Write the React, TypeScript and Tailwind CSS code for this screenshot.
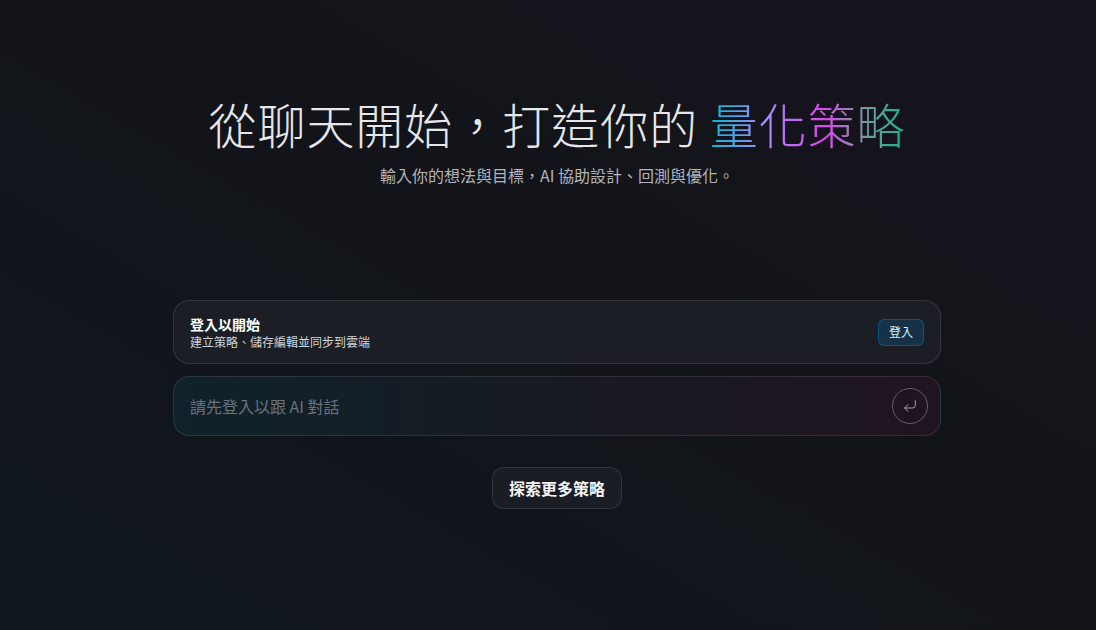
import { CornerDownLeft } from 'lucide-react';

const font = { fontFamily: '"Noto Sans CJK TC", "Noto Sans", sans-serif' };

export default function App() {
  return (
    <div
      style={font}
      className="min-h-screen w-full bg-linear-to-tr from-[#0f161e] via-[#121419] to-[#16131d] text-gray-100"
    >
      <main className="flex flex-col items-center pt-[93px] pl-[18px]">
        {/* Hero */}
        <h1 className="text-[48px] leading-[60px] font-light text-gray-200 tracking-[0.02em]">
          從聊天開始，打造你的{' '}
          <span className="bg-[linear-gradient(90deg,#06b6d4_0%,#a78bfa_28%,#d946ef_58%,#8a8fa8_76%,#10b981_100%)] bg-clip-text text-transparent">
            量化策略
          </span>
        </h1>
        <p className="mt-2.5 text-base leading-6 font-normal text-[#b2b4ba]">
          輸入你的想法與目標，AI 協助設計、回測與優化。
        </p>

        {/* Login + Chat */}
        <section className="mt-[113px] w-[768px] flex flex-col gap-3">
          <div className="flex items-center justify-between rounded-2xl border border-white/10 bg-[#1b1e24] px-4 py-[13px]">
            <div>
              <p className="text-sm leading-5 font-semibold text-white">登入以開始</p>
              <p className="text-xs leading-4 text-gray-300">建立策略、儲存編輯並同步到雲端</p>
            </div>
            <button className="h-[27px] rounded-md border border-sky-700/60 bg-[#153247] px-2.5 text-xs font-normal text-sky-100">
              登入
            </button>
          </div>

          <div className="flex h-[60px] items-center justify-between rounded-2xl border border-white/10 bg-linear-to-r from-[#10222a] via-[#171a22] to-[#1f1420] pl-4 pr-3">
            <span className="text-base text-gray-500">請先登入以跟 AI 對話</span>
            <button className="flex h-9 w-9 items-center justify-center rounded-full border border-gray-500/80 text-gray-400">
              <CornerDownLeft size={16} strokeWidth={1.5} />
            </button>
          </div>
        </section>

        <button className="mt-[31px] rounded-xl border border-white/10 bg-[#1a1d23] px-4 py-2 text-base leading-6 font-semibold text-gray-100">
          探索更多策略
        </button>
      </main>
    </div>
  );
}
